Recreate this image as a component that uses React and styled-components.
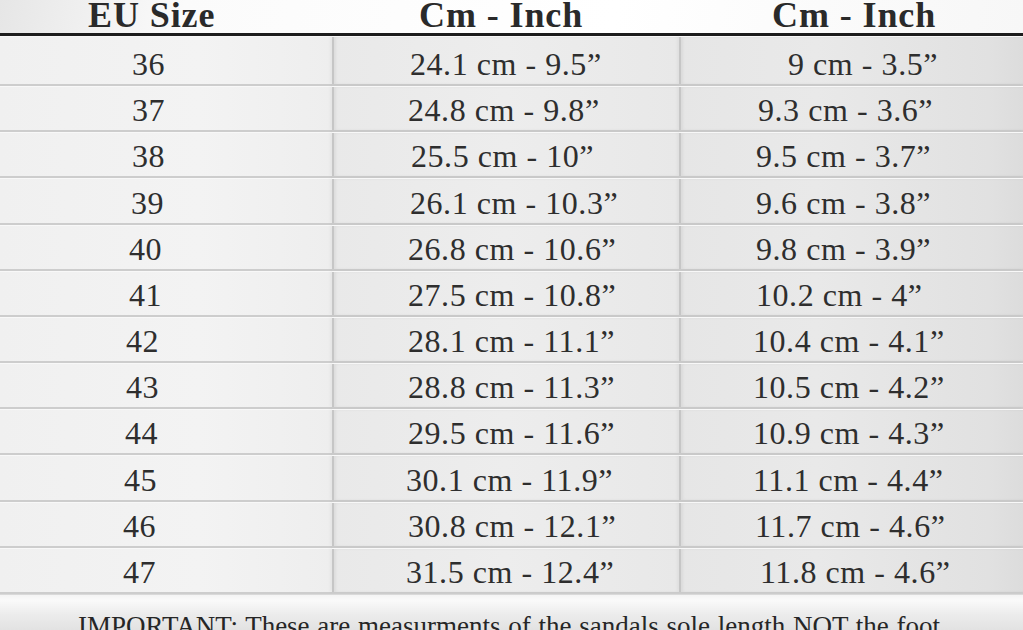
import React from 'react'
import styled, { createGlobalStyle } from 'styled-components'

const GlobalStyle = createGlobalStyle`
  html, body {
    margin: 0;
    padding: 0;
    background: #e9e9e9;
  }
  body {
    font-family: "Liberation Serif", "Times New Roman", serif;
    overflow: hidden;
  }
`

const Sheet = styled.div`
  width: 1023px;
  height: 630px;
  overflow: hidden;
  display: flex;
  flex-direction: column;
  background: #ececec;
`

const HeaderRow = styled.div`
  flex-shrink: 0;
  display: grid;
  grid-template-columns: 332px 347px 1fr;
  height: 36px;
  box-sizing: border-box;
  border-bottom: 3px solid #1d1d1d;
  background: linear-gradient(100deg, #e6e6e6 0%, #fbfbfb 18%, #ffffff 60%, #f7f7f7 100%);
`

const HeaderCell = styled.div`
  display: flex;
  align-items: flex-start;
  padding-left: ${p => p.indent}px;
  padding-top: 1px;
  font-size: 36px;
  font-weight: 700;
  line-height: 29px;
  letter-spacing: 0.9px;
  color: #2a2a2a;
  white-space: nowrap;
`

const Row = styled.div`
  flex-shrink: 0;
  display: grid;
  grid-template-columns: 332px 347px 1fr;
  height: ${p => (p.first ? 50 : 46.18)}px;
  box-sizing: border-box;
  border-bottom: 2px solid #cdcdcd;
`

const colBg = [
  'linear-gradient(90deg, #f0f0f0, #f3f3f3 60%, #eeeeee)',
  'linear-gradient(90deg, #e9e9e9, #ededed 50%, #e8e8e8)',
  'linear-gradient(90deg, #e6e6e6, #e9e9e9 40%, #e1e1e1 90%, #dcdcdc)',
]

const Cell = styled.div`
  display: flex;
  align-items: flex-end;
  padding-left: ${p => p.indent}px;
  padding-bottom: 4px;
  font-size: 32px;
  line-height: 1;
  letter-spacing: 0.55px;
  color: #2e2e2e;
  white-space: nowrap;
  background: ${p => colBg[p.col]};
  box-shadow: ${p =>
    p.col > 0
      ? 'inset 2px 0 0 #c6c6c6, inset 4px 0 3px rgba(0, 0, 0, 0.05), -2px 0 3px rgba(0, 0, 0, 0.04)'
      : 'none'};
  border-top: 1px solid #f8f8f8;
  box-sizing: border-box;
`

const Footer = styled.div`
  flex: 1;
  min-height: 0;
  overflow: hidden;
  display: flex;
  align-items: flex-start;
  padding-left: 78px;
  padding-top: 18px;
  background: linear-gradient(180deg, #f4f4f4 0%, #fafafa 15%, #ececec 55%, #e2e2e2 100%);
  border-top: 1px solid #d9d9d9;
`

const Note = styled.p`
  margin: 0;
  font-size: 27px;
  line-height: 1;
  word-spacing: 1px;
  color: #262626;
  white-space: nowrap;
`

const sizes = [
  { eu: '36', cm: '24.1 cm - 9.5\u201D', sole: '9 cm - 3.5\u201D', a: 132, b: 78, c: 109 },
  { eu: '37', cm: '24.8 cm - 9.8\u201D', sole: '9.3 cm - 3.6\u201D', a: 132, b: 76, c: 79 },
  { eu: '38', cm: '25.5 cm - 10\u201D', sole: '9.5 cm - 3.7\u201D', a: 132, b: 79, c: 77 },
  { eu: '39', cm: '26.1 cm - 10.3\u201D', sole: '9.6 cm - 3.8\u201D', a: 131, b: 78, c: 77 },
  { eu: '40', cm: '26.8 cm - 10.6\u201D', sole: '9.8 cm - 3.9\u201D', a: 129, b: 76, c: 77 },
  { eu: '41', cm: '27.5 cm - 10.8\u201D', sole: '10.2 cm - 4\u201D', a: 129, b: 76, c: 77 },
  { eu: '42', cm: '28.1 cm - 11.1\u201D', sole: '10.4 cm - 4.1\u201D', a: 126, b: 76, c: 74 },
  { eu: '43', cm: '28.8 cm - 11.3\u201D', sole: '10.5 cm - 4.2\u201D', a: 126, b: 76, c: 74 },
  { eu: '44', cm: '29.5 cm - 11.6\u201D', sole: '10.9 cm - 4.3\u201D', a: 125, b: 76, c: 74 },
  { eu: '45', cm: '30.1 cm - 11.9\u201D', sole: '11.1 cm - 4.4\u201D', a: 124, b: 74, c: 74 },
  { eu: '46', cm: '30.8 cm - 12.1\u201D', sole: '11.7 cm - 4.6\u201D', a: 123, b: 76, c: 76 },
  { eu: '47', cm: '31.5 cm - 12.4\u201D', sole: '11.8 cm - 4.6\u201D', a: 123, b: 74, c: 81 },
]

export default function App() {
  return (
    <>
      <GlobalStyle />
      <Sheet>
        <HeaderRow>
          <HeaderCell indent={88}>EU Size</HeaderCell>
          <HeaderCell indent={87}>Cm - Inch</HeaderCell>
          <HeaderCell indent={93}>Cm - Inch</HeaderCell>
        </HeaderRow>
        {sizes.map((s, i) => (
          <Row key={s.eu} first={i === 0}>
            <Cell col={0} indent={s.a}>{s.eu}</Cell>
            <Cell col={1} indent={s.b}>{s.cm}</Cell>
            <Cell col={2} indent={s.c}>{s.sole}</Cell>
          </Row>
        ))}
        <Footer>
          <Note>
            IMPORTANT: These are measurments of the sandals sole length NOT the foot
          </Note>
        </Footer>
      </Sheet>
    </>
  )
}
